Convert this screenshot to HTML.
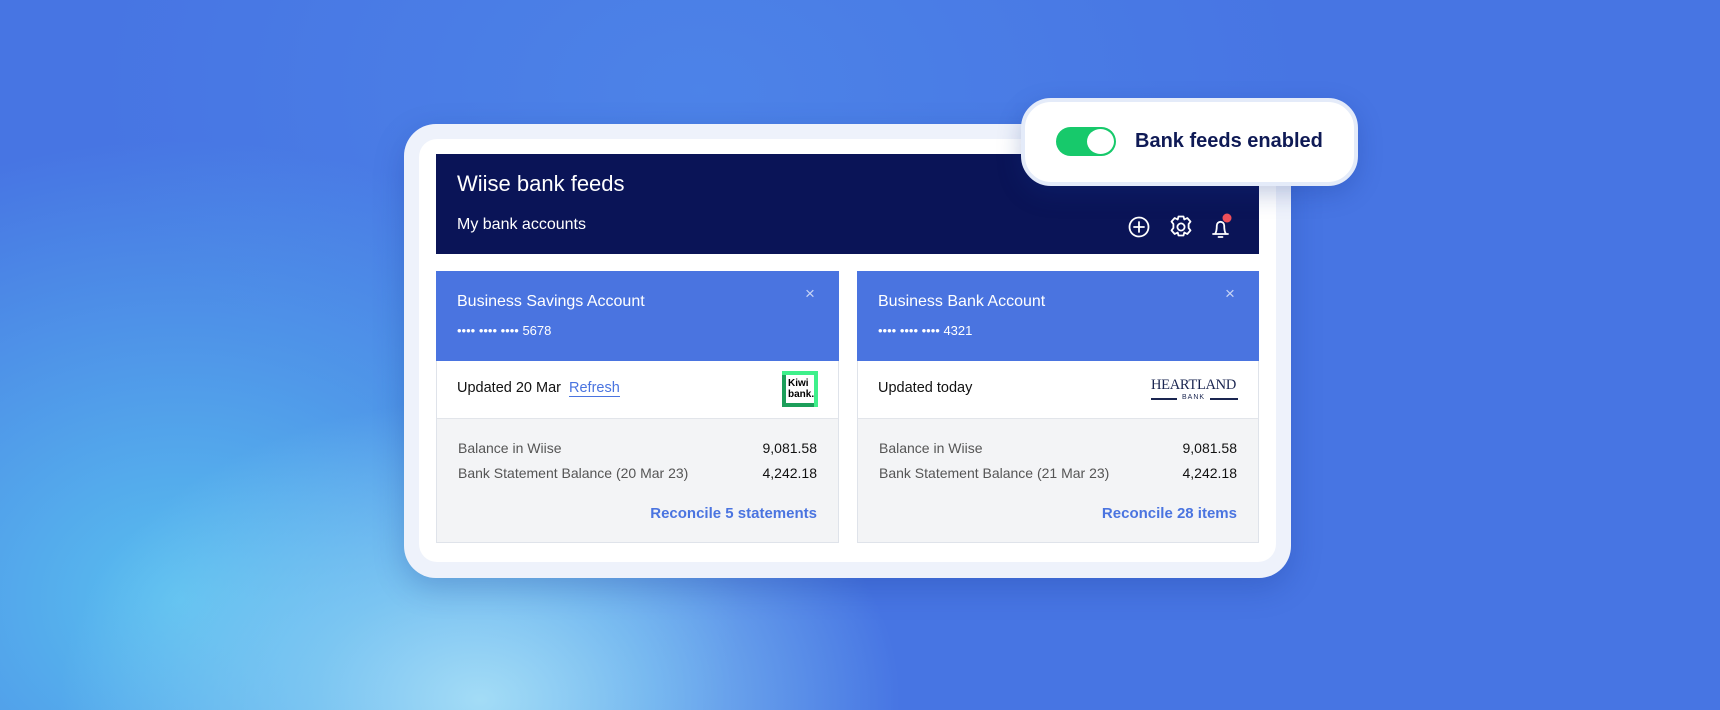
<!DOCTYPE html>
<html><head><meta charset="utf-8"><style>
*{margin:0;padding:0;box-sizing:border-box}
body{width:1720px;height:710px;overflow:hidden;position:relative;font-family:"Liberation Sans",sans-serif;
background:
radial-gradient(ellipse 420px 300px at 480px 700px, #a3dcf6 0%, rgba(140,210,245,.7) 40%, rgba(110,180,240,0) 100%),
radial-gradient(ellipse 560px 460px at 180px 600px, rgba(90,195,240,.95) 0%, rgba(90,170,240,0) 100%),
radial-gradient(ellipse 600px 400px at 700px 90px, rgba(80,140,235,.6) 0%, rgba(80,140,235,0) 100%),
#4775e3;}
.abs{position:absolute}
.outer{left:404px;top:124px;width:887px;height:454px;border-radius:32px;background:#eef2fb;box-shadow:0 10px 30px rgba(20,50,140,.25)}
.inner{left:419px;top:139px;width:857px;height:423px;border-radius:18px;background:#fff}
.hdr{left:436px;top:154px;width:823px;height:100px;background:#0a1457;color:#fff}
.pill{left:1021px;top:98px;width:337px;height:88px;border-radius:30px;background:#fff;border:4px solid #e4ebf9;box-shadow:0 8px 24px rgba(20,50,140,.25)}
.card{width:403px;height:272px;top:271px;border:1px solid #dfe3ea;background:#f3f4f6}
.top{position:absolute;left:-1px;top:-1px;right:-1px;height:90px;background:#4a74e0;color:#fff}
.mid{position:absolute;left:0;right:0;top:89px;height:58px;background:#fff;border-bottom:1px solid #e2e5ea}
.t{position:absolute;white-space:nowrap}
</style></head><body>
<div class="abs outer"></div>
<div class="abs inner"></div>
<div class="abs hdr">
 <div class="t" style="left:21px;top:17px;font-size:22px">Wiise bank feeds</div>
 <div class="t" style="left:21px;top:62px;font-size:16px">My bank accounts</div>
 <svg class="abs" style="left:692px;top:58px" width="110" height="28" viewBox="0 0 110 28" fill="none" stroke="#fff" stroke-width="1.8" stroke-linecap="round" stroke-linejoin="round">
  <circle cx="11" cy="15" r="9.5"/><path d="M11 10v10M6 15h10"/>
  <g transform="translate(53,15)"><path d="M-2.5-10.5h5l.8 3 3-1.5 3.2 3.6-1.9 2.5v3.8l1.9 2.5-3.2 3.6-3-1.5-.8 3h-5l-.8-3-3 1.5-3.2-3.6 1.9-2.5v-3.8l-1.9-2.5 3.2-3.6 3 1.5z"/><circle r="3.6"/></g>
  <path d="M85 22h15M87 22c1.5-2 1.8-4 1.8-8.5a3.7 3.7 0 0 1 7.4 0c0 4.5.3 6.5 1.8 8.5M90.5 25h4"/>
  <circle cx="99" cy="6" r="4.5" fill="#f0505a" stroke="none"/>
 </svg>
</div>
<div class="abs pill">
 <div class="abs" style="left:31px;top:25px;width:60px;height:29px;border-radius:15px;background:#17c96b"></div>
 <div class="abs" style="left:62px;top:27px;width:27px;height:25px;border-radius:50%;background:#fff"></div>
 <div class="t" style="left:110px;top:28px;font-size:20px;font-weight:bold;color:#0f1a55">Bank feeds enabled</div>
</div>

<div class="abs card" style="left:436px">
 <div class="top">
  <div class="t" style="left:21px;top:22px;font-size:16px">Business Savings Account</div>
  <div class="t" style="left:21px;top:52px;font-size:13px">•••• •••• •••• 5678</div>
  <div class="t" style="left:369px;top:13px;font-size:17px;color:#c8d5f6">×</div>
 </div>
 <div class="mid">
  <div class="t" style="left:20px;top:19px;font-size:14.5px;color:#111">Updated 20 Mar <span style="color:#4a74e0;border-bottom:1px solid #4a74e0;margin-left:4px">Refresh</span></div>
  <div class="abs" style="left:345px;top:10px;width:36px;height:36px;background:#1c9e5a"></div>
  <div class="abs" style="left:345px;top:10px;width:36px;height:36px;border-top:4px solid #3ef08a;border-right:4px solid #3ef08a"></div>
  <div class="abs" style="left:349px;top:14px;width:28px;height:28px;background:#fff;font-size:10px;font-weight:bold;line-height:11px;padding:3px 0 0 2px;color:#000">Kiwi<br>bank.</div>
 </div>
 <div class="t" style="left:21px;top:168px;font-size:14px;color:#555">Balance in Wiise</div>
 <div class="t" style="right:21px;top:168px;font-size:14px;color:#111">9,081.58</div>
 <div class="t" style="left:21px;top:193px;font-size:14px;color:#555">Bank Statement Balance (20 Mar 23)</div>
 <div class="t" style="right:21px;top:193px;font-size:14px;color:#111">4,242.18</div>
 <div class="t" style="right:21px;top:233px;font-size:15px;font-weight:bold;color:#4a74e0">Reconcile 5 statements</div>
</div>

<div class="abs card" style="left:857px;width:402px">
 <div class="top">
  <div class="t" style="left:21px;top:22px;font-size:16px">Business Bank Account</div>
  <div class="t" style="left:21px;top:52px;font-size:13px">•••• •••• •••• 4321</div>
  <div class="t" style="left:368px;top:13px;font-size:17px;color:#c8d5f6">×</div>
 </div>
 <div class="mid">
  <div class="t" style="left:20px;top:19px;font-size:14.5px;color:#111">Updated today</div>
  <div class="t" style="left:293px;top:16px;font-family:'Liberation Serif',serif;font-size:14.5px;color:#1a2550;letter-spacing:-.3px">HEARTLAND</div>
  <div class="abs" style="left:293px;top:37px;width:26px;height:2px;background:#1a2550"></div>
  <div class="t" style="left:324px;top:33px;font-size:7px;color:#1a2550;letter-spacing:1px">BANK</div>
  <div class="abs" style="left:352px;top:37px;width:28px;height:2px;background:#1a2550"></div>
 </div>
 <div class="t" style="left:21px;top:168px;font-size:14px;color:#555">Balance in Wiise</div>
 <div class="t" style="right:21px;top:168px;font-size:14px;color:#111">9,081.58</div>
 <div class="t" style="left:21px;top:193px;font-size:14px;color:#555">Bank Statement Balance (21 Mar 23)</div>
 <div class="t" style="right:21px;top:193px;font-size:14px;color:#111">4,242.18</div>
 <div class="t" style="right:21px;top:233px;font-size:15px;font-weight:bold;color:#4a74e0">Reconcile 28 items</div>
</div>
</body></html>
